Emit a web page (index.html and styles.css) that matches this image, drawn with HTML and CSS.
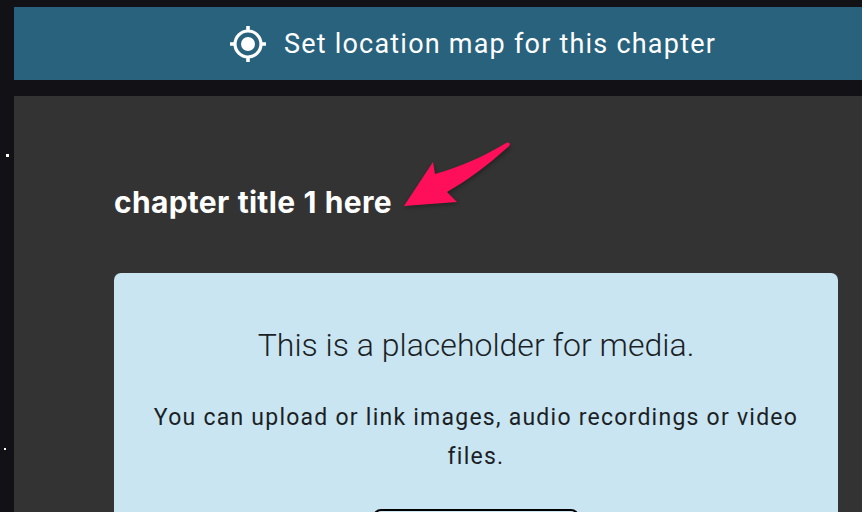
FILE: index.html
```html
<!DOCTYPE html>
<html lang="en">
<head>
  <meta charset="UTF-8">
  <meta name="viewport" content="width=device-width, initial-scale=1.0">
  <title>Chapter editor</title>
  <link rel="stylesheet" href="styles.css">
</head>
<body>

<span class="speck speck-top"></span>
<span class="speck speck-bottom"></span>

<div class="location-bar">
  <svg class="location-icon" viewBox="0 0 38 38" width="38" height="38">
    <circle cx="19" cy="19" r="13" fill="none" stroke="#fff" stroke-width="3.2"/>
    <circle cx="19" cy="19" r="7" fill="#fff"/>
    <path d="M19 1v6M19 31v6M1 19h6M31 19h6" stroke="#fff" stroke-width="3.6" fill="none"/>
  </svg>
  <span>Set location map for this chapter</span>
</div>

<div class="chapter-panel">
  <h1>chapter title 1 here</h1>
  <div class="media-card">
    <h2>This is a placeholder for media.</h2>
    <p>You can upload or link images, audio recordings or video files.</p>
    <div class="upload-button"></div>
  </div>
</div>

<!-- Annotation arrow -->
<svg class="arrow" viewBox="0 0 862 512" width="862" height="512">
  <path class="arrow-shadow" d="M404 206L433 162L435 174C460 167 485 156 506 144C510 142 511 146 508 148C488 165 468 180 447 192L457 202Z"/>
  <path class="arrow-head" d="M404 206L433 162L435 174C460 167 485 156 506 143C510 141 511 145 508 147C488 165 468 180 447 192L457 202Z"/>
</svg>

</body>
</html>
```

FILE: styles.css
```css
html, body {
  height: 100%;
}

body {
  margin: 0;
  padding: 7px 0 0 14px;
  box-sizing: border-box;
  background-color: #111116;
  font-family: Roboto, "Liberation Sans", sans-serif;
  overflow: hidden;
}

.location-bar {
  display: flex;
  justify-content: center;
  align-items: center;
  gap: 17px;
  height: 73px;
  padding-left: 69px;
  background-color: #28627d;
  color: #ffffff;
  font-size: 27px;
  letter-spacing: 1.22px;
}

.location-icon {
  flex-shrink: 0;
}

.chapter-panel {
  margin-top: 16px;
  padding: 87px 24px 0 100px;
  height: 416px;
  box-sizing: border-box;
  background-color: #333333;
  overflow: hidden;
}

h1 {
  margin: 0 0 52px 0;
  color: #ffffff;
  font-family: Inter, Roboto, sans-serif;
  font-size: 30px;
  line-height: 38px;
  font-weight: 700;
  letter-spacing: 0.3px;
  word-spacing: 0.7px;
}

.media-card {
  padding: 51px 32px 0 32px;
  height: 300px;
  background-color: #c8e5f1;
  border-radius: 7px;
  text-align: center;
  color: #1c1f26;
}

h2 {
  margin: 0 0 32px 0;
  font-size: 32px;
  line-height: 42px;
  font-weight: 300;
}

.media-card p {
  margin: 0 0 33px 0;
  font-size: 23px;
  line-height: 39px;
  letter-spacing: 1.24px;
}

.upload-button {
  width: 206px;
  height: 60px;
  margin: 0 auto;
  box-sizing: border-box;
  border: 2px solid #000000;
  border-radius: 8px;
}

.speck {
  position: absolute;
  width: 3px;
  height: 3px;
  background-color: #ffffff;
}

.speck-top {
  left: 6px;
  top: 154px;
}

.speck-bottom {
  left: 4px;
  top: 448px;
  width: 2px;
  height: 2px;
}

.arrow {
  position: absolute;
  left: 0;
  top: 0;
}

.arrow-head {
  fill: #ff0f5a;
}

.arrow-shadow {
  fill: #000000;
  opacity: 0.3;
  transform: translate(1px, 2px);
  filter: blur(2px);
}
```
